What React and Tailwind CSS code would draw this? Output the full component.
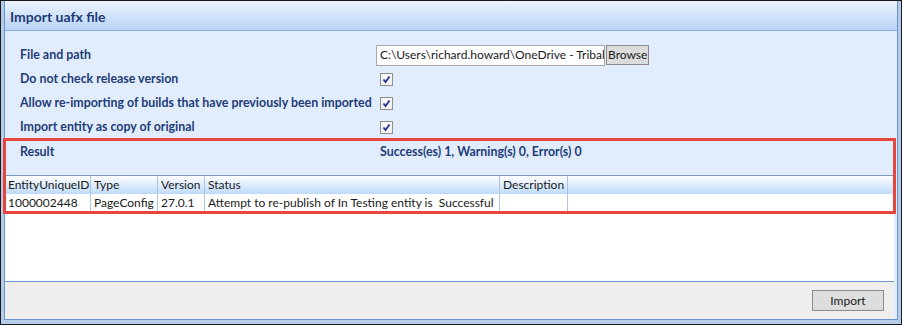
import React from "react";

const labels = [
  "Do not check release version",
  "Allow re-importing of builds that have previously been imported",
  "Import entity as copy of original",
];

const columns = [
  { name: "EntityUniqueID", w: "w-[86px]" },
  { name: "Type", w: "w-[67px]" },
  { name: "Version", w: "w-[47px]" },
  { name: "Status", w: "w-[295px]" },
  { name: "Description", w: "w-[68px]" },
];

const row = ["1000002448", "PageConfig", "27.0.1", "Attempt to re-publish of In Testing entity is  Successful", ""];

const Check = () => (
  <span className="ml-[4px] flex h-[13px] w-[13px] items-center justify-center border border-[#8e8f8f] bg-[#f4f4f4]">
    <svg width="9" height="9" viewBox="0 0 9 9">
      <path d="M1.5 4.5 L3.5 7 L7.5 1.5" fill="none" stroke="#2a2f8c" strokeWidth="1.8" />
    </svg>
  </span>
);

export default function App() {
  return (
    <div
      className="relative flex h-[325px] w-[902px] flex-col border border-[#1a1a1a] bg-[#b4cbea] px-[3px] pb-[4px]"
      style={{ fontFamily: "Lato, 'Open Sans', sans-serif" }}
    >
      <div className="flex flex-1 flex-col border border-t-0 border-[#6b95d0] bg-[#e1edfc]">
        {/* Title */}
        <div className="flex h-[30px] items-center border-b border-[#8fb0dc] bg-gradient-to-b from-[#edf4fd] to-[#b9d3f6] pl-[5px] pt-[1px]">
          <span className="text-[14px] font-bold text-[#1e3c78]">Import uafx file</span>
        </div>

        {/* Form */}
        <div className="grid grid-cols-[356px_1fr] whitespace-nowrap pl-[15px] pt-[12px] text-[12.4px] font-bold text-[#1e3c78]">
          <div className="flex h-[24px] items-center">File and path</div>
          <div className="flex h-[24px] items-center">
            <div className="flex h-[21px] w-[229px] items-center overflow-hidden border border-[#a9a9a9] bg-white pl-[3px] text-[12px] font-normal text-[#1a1a1a]">
              C:\Users\richard.howard\OneDrive - Tribal
            </div>
            <button className="ml-[1px] h-[20px] border border-[#8a8a8a] bg-[#dcdcdc] px-[1px] text-[12px] font-normal text-[#1a1a1a]">
              Browse
            </button>
          </div>
          {labels.map((l) => (
            <React.Fragment key={l}>
              <div className="flex h-[24px] items-center">{l}</div>
              <div className="flex h-[24px] items-center">
                <Check />
              </div>
            </React.Fragment>
          ))}
          <div className="flex h-[36px] items-center pb-[10px]">Result</div>
          <div className="flex h-[36px] items-center pb-[10px] pl-[4px]">Success(es) 1, Warning(s) 0, Error(s) 0</div>
        </div>

        {/* Grid */}
        <div className="mr-[3px] flex flex-1 flex-col bg-white">
          <div className="flex h-[19px] border-t border-[#7a98bf] bg-gradient-to-b from-white to-[#bedaf9] text-[12px] text-[#1a1a1a]">
            {columns.map((c) => (
              <div key={c.name} className={`${c.w} flex items-center whitespace-nowrap border-r border-[#a9c4e4] pl-[3px]`}>
                {c.name}
              </div>
            ))}
          </div>
          <div className="flex h-[18px] border-b border-[#c9d6e6] text-[12px] text-[#1a1a1a]">
            {columns.map((c, i) => (
              <div key={c.name} className={`${c.w} flex items-center overflow-hidden whitespace-pre border-r border-[#a9c4e4] pl-[3px]`}>
                {row[i]}
              </div>
            ))}
          </div>
          <div className="flex-1" />
        </div>

        {/* Footer */}
        <div className="mr-[3px] flex h-[38px] items-center justify-end border-t border-[#6b95d0] bg-[#eeeeee] pr-[10px]">
          <button className="h-[21px] w-[72px] border border-[#8a8a8a] bg-[#dddddd] text-[12px] text-[#1a1a1a]">
            Import
          </button>
        </div>
      </div>

      {/* annotation */}
      <div className="pointer-events-none absolute left-[2px] top-[137px] h-[76px] w-[893px] border-[3px] border-[#e8453c]" />
    </div>
  );
}
